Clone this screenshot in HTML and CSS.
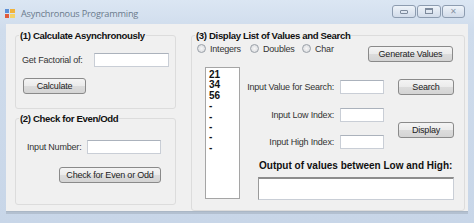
FILE: index.html
```html
<!DOCTYPE html>
<html lang="en">
<head>
  <meta charset="UTF-8">
  <title>Asynchronous Programming</title>
  <link rel="stylesheet" href="styles.css">
</head>
<body>
  <div class="window">
    <!-- Title bar -->
    <div class="titlebar">
      <svg class="app-icon" width="10" height="9" viewBox="0 0 10 9">
        <rect x="0" y="0" width="4" height="4" fill="#5b8fd6"/>
        <rect x="5" y="0" width="5" height="4" fill="#f0b23c"/>
        <rect x="0" y="5" width="4" height="4" fill="#e05a3a"/>
        <rect x="5" y="5" width="5" height="4" fill="#f3d36a"/>
      </svg>
      <span class="title">Asynchronous Programming</span>
      <div class="caption-buttons">
        <span class="cap-btn"><span class="ico-min"></span></span>
        <span class="cap-btn"><span class="ico-max"></span></span>
        <span class="cap-btn close">&#x2715;</span>
      </div>
    </div>

    <div class="client">
      <div class="left-col">
        <fieldset class="group g1">
          <legend>(1) Calculate Asynchronously</legend>
          <div class="group-body">
            <div class="row">
              <label class="lbl">Get Factorial of:</label>
              <input type="text" class="txt factorial">
            </div>
            <button class="btn calc">Calculate</button>
          </div>
        </fieldset>

        <fieldset class="group g2">
          <legend>(2) Check for Even/Odd</legend>
          <div class="group-body">
            <div class="row">
              <label class="lbl">Input Number:</label>
              <input type="text" class="txt number">
            </div>
            <button class="btn evenodd">Check for Even or Odd</button>
          </div>
        </fieldset>
      </div>

      <fieldset class="group g3">
        <legend>(3) Display List of Values and Search</legend>
        <div class="radio-row">
          <label class="radio integers"><span class="dot"></span>Integers</label>
          <label class="radio doubles"><span class="dot"></span>Doubles</label>
          <label class="radio"><span class="dot"></span>Char</label>
          <button class="btn generate">Generate Values</button>
        </div>
        <div class="g3-body">
          <ul class="listbox">
            <li>21</li>
            <li>34</li>
            <li>56</li>
            <li>-</li>
            <li>-</li>
            <li>-</li>
            <li>-</li>
            <li>-</li>
          </ul>
          <div class="search-panel">
            <div class="search-grid">
              <label class="lbl r1">Input Value for Search:</label>
              <input type="text" class="txt small r1">
              <button class="btn side r1">Search</button>
              <label class="lbl r2">Input Low Index:</label>
              <input type="text" class="txt small r2">
              <button class="btn side display">Display</button>
              <label class="lbl r3">Input High Index:</label>
              <input type="text" class="txt small r3">
            </div>
            <div class="output-title">Output of values between Low and High:</div>
            <div class="output-box"></div>
          </div>
        </div>
      </fieldset>
    </div>
  </div>
</body>
</html>
```

FILE: styles.css
```css
* {
  box-sizing: border-box;
}

body {
  margin: 0;
  font-family: "Liberation Sans", Arial, sans-serif;
  font-size: 9px;
  color: #333;
  background: #b9c9dd;
}

.window {
  width: 474px;
  height: 223px;
  background: linear-gradient(#dbe6f3, #cfdcec 30px, #c8d6e8);
  overflow: hidden;
}

.titlebar {
  height: 24px;
  display: flex;
  align-items: center;
  padding: 0 9px 0 5px;
}

.app-icon {
  margin-right: 6px;
  margin-top: 3px;
}

.title {
  color: #6a7a8c;
  font-family: "Open Sans", sans-serif;
  font-size: 9.2px;
  letter-spacing: -0.2px;
  margin-top: 2px;
}

.caption-buttons {
  margin-left: auto;
  display: flex;
  gap: 1px;
  margin-top: -2px;
}

.cap-btn {
  width: 24px;
  height: 13px;
  border: 1px solid #8d9cb0;
  border-radius: 3px;
  background: linear-gradient(#eef3f9, #d2dcea);
  display: flex;
  align-items: center;
  justify-content: center;
  color: #8a96a6;
  font-size: 8px;
}

.cap-btn.close {
  width: 23px;
}

.ico-min {
  width: 8px;
  height: 4px;
  border: 1px solid #7d8a9c;
  border-radius: 1px;
  margin-top: 2px;
}

.ico-max {
  width: 8px;
  height: 6px;
  border: 1px solid #7d8a9c;
  border-top-width: 2px;
}

.client {
  margin: 0 6px;
  height: 188px;
  background: #f0f0f0;
  border-bottom: 1px solid #aab7c6;
  display: flex;
  padding: 6px 3px 0 9px;
  gap: 15px;
  box-shadow: 0 2px 0 #b3c0d0;
}

.left-col {
  width: 161px;
  display: flex;
  flex-direction: column;
  gap: 4px;
}

.group {
  margin: 0;
  border: 1px solid #dcdcdc;
  border-radius: 3px;
  padding: 0;
  min-width: 0;
}

.group legend {
  font-weight: bold;
  color: #111;
  font-size: 9.6px;
  letter-spacing: -0.35px;
  padding: 0 1px;
  margin-left: 3px;
}

.group-body {
  display: flex;
  flex-direction: column;
  align-items: flex-start;
}

.g1 {
  height: 79px;
}

.g1 .group-body {
  padding: 12px 0 0 6px;
}

.g2 {
  height: 92px;
}

.g2 .group-body {
  padding: 16px 0 0 11px;
}

.g3 {
  flex: 1;
}

.row {
  display: flex;
  align-items: center;
}

.lbl {
  color: #333;
  letter-spacing: -0.2px;
  white-space: nowrap;
}

.g1 .lbl {
  width: 72px;
}

.g2 .lbl {
  width: 60px;
}

.txt {
  border: 1px solid #c9ced6;
  border-top-color: #abb2bc;
  background: #fff;
  height: 14px;
  padding: 0;
}

.factorial {
  width: 75px;
}

.number {
  width: 74px;
}

.btn {
  font-family: inherit;
  font-size: 9px;
  letter-spacing: -0.2px;
  color: #222;
  height: 16px;
  border: 1px solid #8a8a8a;
  border-radius: 3px;
  background: linear-gradient(#f4f4f4 0%, #ebebeb 50%, #dcdcdc 51%, #d4d4d4 100%);
  padding: 0;
  cursor: pointer;
}

.calc {
  width: 63px;
  margin: 11px 0 0 1px;
}

.evenodd {
  width: 102px;
  margin: 13px 0 0 32px;
}

.radio-row {
  display: flex;
  align-items: flex-start;
  padding-left: 5px;
  margin-top: 1px;
}

.radio {
  display: flex;
  align-items: center;
  color: #333;
  letter-spacing: -0.2px;
  margin-top: 1px;
  height: 11px;
}

.integers {
  width: 53px;
}

.doubles {
  width: 52px;
}

.dot {
  width: 9px;
  height: 9px;
  border-radius: 50%;
  border: 1px solid #9aa0a8;
  background: radial-gradient(#f6f6f6, #d6d8dc);
  margin-right: 4px;
}

.generate {
  width: 85px;
  margin: 4px 11px 0 auto;
}

.g3-body {
  display: flex;
  margin-top: 5px;
  padding-left: 5px;
}

.listbox {
  list-style: none;
  margin: 0 0 0 8px;
  padding: 2px 0 0 3px;
  width: 35px;
  height: 132px;
  background: #fff;
  border: 1px solid #a5a5a5;
  font-weight: bold;
  font-size: 10px;
  line-height: 10.4px;
  color: #111;
}

.search-panel {
  margin-left: 8px;
  display: flex;
  flex-direction: column;
}

.search-grid {
  display: grid;
  grid-template-columns: 86px 44px 56px;
  grid-template-rows: 16px 15px 15px;
  column-gap: 6px;
  row-gap: 12px;
  margin-top: 12px;
  align-items: center;
}

.search-grid .lbl {
  justify-self: end;
}

.search-grid .btn.side {
  width: 56px;
  margin-left: 8px;
}

.small {
  width: 44px;
}

.r1 { grid-row: 1; }
.r2 { grid-row: 2; }
.r3 { grid-row: 3; }

.display {
  grid-row: 2 / span 2;
  grid-column: 3;
  margin-top: 4px;
}

.output-title {
  font-weight: bold;
  color: #111;
  font-size: 10px;
  letter-spacing: 0;
  margin: 11px 0 0 11px;
}

.output-box {
  width: 196px;
  height: 23px;
  margin: 6px 0 0 10px;
  background: #fff;
  border: 1px solid #c9ced6;
  border-top: 2px solid #8c8c8c;
  border-left-color: #9a9a9a;
}
```
